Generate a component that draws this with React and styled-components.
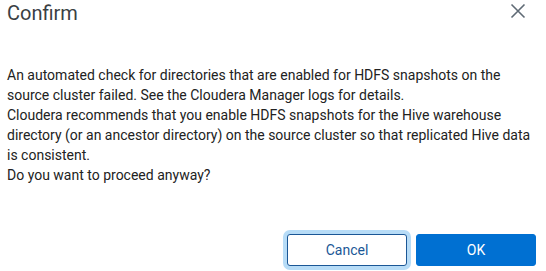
import React from "react";
import styled, { createGlobalStyle } from "styled-components";

const GlobalStyle = createGlobalStyle`
  html, body {
    margin: 0;
    padding: 0;
    background: #fff;
  }
  body {
    font-family: Roboto, "Liberation Sans", sans-serif;
  }
`;

const Dialog = styled.div`
  width: 546px;
  height: 271px;
  display: flex;
  flex-direction: column;
  box-sizing: border-box;
  background: #fff;
`;

const Header = styled.div`
  display: flex;
  align-items: flex-start;
  justify-content: space-between;
  padding: 1px 20px 0 7px;
`;

const Title = styled.h1`
  margin: 0;
  font-size: 20px;
  line-height: 24px;
  font-weight: 400;
  color: #3a3f44;
`;

const Close = styled.button`
  border: none;
  background: none;
  padding: 0;
  margin-top: 2px;
  width: 16px;
  height: 16px;
  cursor: pointer;
  display: flex;
`;

const Body = styled.div`
  padding: 40px 7px 0 7px;
  font-size: 14px;
  line-height: 20px;
  color: #222;
  flex: 1;
`;

const Footer = styled.div`
  display: flex;
  justify-content: flex-end;
  gap: 9px;
  padding: 0 10px 5px 0;
`;

const Button = styled.button`
  width: 120px;
  height: 32px;
  box-sizing: border-box;
  border-radius: 3px;
  font-family: Roboto, "Liberation Sans", sans-serif;
  font-size: 14px;
  cursor: pointer;
  border: 1px solid ${(p) => (p.$primary ? "#0070d2" : "#1b5796")};
  background: ${(p) => (p.$primary ? "#0070d2" : "#fff")};
  color: ${(p) => (p.$primary ? "#fff" : "#1b5796")};
  box-shadow: ${(p) => (p.$focused ? "0 0 0 4px #b7dcf7" : "none")};
`;

function CloseIcon() {
  return (
    <svg width="16" height="16" viewBox="0 0 16 16">
      <path
        d="M1.5 1.5 L14.5 14.5 M14.5 1.5 L1.5 14.5"
        stroke="#5f6a75"
        strokeWidth="1.6"
        fill="none"
      />
    </svg>
  );
}

export default function App() {
  return (
    <>
      <GlobalStyle />
      <Dialog>
        <Header>
          <Title>Confirm</Title>
          <Close aria-label="Close">
            <CloseIcon />
          </Close>
        </Header>
        <Body>
          An automated check for directories that are enabled for HDFS snapshots on the
          source cluster failed. See the Cloudera Manager logs for details.
          <br />
          Cloudera recommends that you enable HDFS snapshots for the Hive warehouse
          directory (or an ancestor directory) on the source cluster so that replicated
          Hive data is consistent.
          <br />
          Do you want to proceed anyway?
        </Body>
        <Footer>
          <Button $focused>Cancel</Button>
          <Button $primary>OK</Button>
        </Footer>
      </Dialog>
    </>
  );
}
